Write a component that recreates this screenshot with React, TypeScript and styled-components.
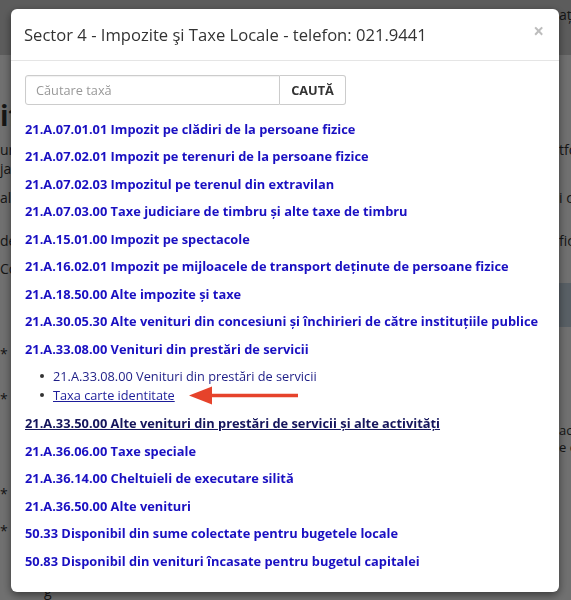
import React from 'react'
import styled, { createGlobalStyle } from 'styled-components'

const GlobalStyle = createGlobalStyle`
  html, body {
    margin: 0;
    padding: 0;
    width: 571px;
    height: 600px;
    overflow: hidden;
    font-family: 'Open Sans', 'Noto Sans', sans-serif;
  }
`

const Page = styled.div`
  width: 571px;
  height: 600px;
  background: #fff;
  color: #333;
  overflow: hidden;
`

const NavBar = styled.div`
  height: 55px;
  background: #d2d2d2;
  display: flex;
  justify-content: flex-end;
  align-items: flex-start;
  padding-top: 5px;
  box-sizing: border-box;
  font-size: 14px;
  line-height: 20px;
`

const NavText = styled.span`
  width: 12px;
  white-space: nowrap;
`

const PageBody = styled.div`
  display: flex;
  flex-direction: column;
`

const PageRow = styled.div<{ $h: number; $size?: number; $bold?: boolean; $tint?: string }>`
  height: ${(p) => p.$h}px;
  display: flex;
  justify-content: space-between;
  align-items: center;
  font-size: ${(p) => p.$size ?? 14}px;
  font-weight: ${(p) => (p.$bold ? 700 : 400)};
  background: ${(p) => p.$tint ?? 'transparent'};
  white-space: nowrap;
`

const Frag = styled.span<{ $indent?: number }>`
  width: 12px;
  padding-left: ${(p) => p.$indent ?? 0}px;
`

const Backdrop = styled.div`
  position: fixed;
  inset: 0;
  background: rgba(0, 0, 0, 0.56);
  padding: 9px 0 0 11px;
`

const Modal = styled.div`
  width: 548px;
  background: #fff;
  border-radius: 6px;
  box-shadow: 0 3px 9px rgba(0, 0, 0, 0.5);
`

const Header = styled.div`
  display: flex;
  justify-content: space-between;
  align-items: center;
  padding: 14px 15px 14px 13px;
  border-bottom: 1px solid #e5e5e5;
`

const Title = styled.h4`
  margin: 0;
  font-size: 16.6px;
  font-weight: 400;
  line-height: 23px;
  color: #333;
`

const Close = styled.button`
  border: 0;
  background: none;
  padding: 0;
  font-family: 'Open Sans', sans-serif;
  font-size: 19px;
  font-weight: 700;
  line-height: 1;
  color: #bdbdbd;
  margin-top: -6px;
`

const Body = styled.div`
  padding: 14px 13px 13px 14px;
`

const SearchGroup = styled.div`
  display: flex;
  height: 30px;
  margin-bottom: 15px;
`

const SearchInput = styled.input`
  width: 255px;
  box-sizing: border-box;
  border: 1px solid #ccc;
  border-radius: 3px 0 0 3px;
  padding: 0 10px;
  font-family: 'Open Sans', sans-serif;
  font-size: 12.75px;
  color: #555;
  box-shadow: inset 0 1px 1px rgba(0, 0, 0, 0.06);
  &::placeholder {
    color: #999;
  }
`

const SearchButton = styled.button`
  width: 66px;
  border: 1px solid #ccc;
  border-left: 0;
  border-radius: 0 3px 3px 0;
  background: #fff;
  font-family: 'Open Sans', sans-serif;
  font-size: 12.75px;
  font-weight: 700;
  color: #333;
  padding: 0;
`

const TaxList = styled.div`
  display: flex;
  flex-direction: column;
`

const TaxLink = styled.a<{ $visited?: boolean }>`
  display: block;
  font-size: 12.85px;
  font-weight: 700;
  line-height: 18px;
  margin-bottom: 9.45px;
  color: ${(p) => (p.$visited ? '#16165c' : '#1a10c2')};
  text-decoration: ${(p) => (p.$visited ? 'underline' : 'none')};
  white-space: nowrap;
`

const SubList = styled.ul`
  margin: 0 0 9.45px;
  padding: 0 0 0 28px;
  list-style: none;
`

const SubItem = styled.li`
  display: flex;
  align-items: center;
  font-size: 12.75px;
  line-height: 18px;
  color: #1d1d86;
  &::before {
    content: '';
    width: 4px;
    height: 4px;
    border-radius: 50%;
    background: #333;
    margin: 0 9px 0 -13px;
  }
`

const SubLink = styled.a`
  color: #1d1d9a;
  text-decoration: underline;
`

const Arrow = styled.svg`
  margin-left: 14px;
  flex: none;
`

const taxes = [
  '21.A.07.01.01 Impozit pe clădiri de la persoane fizice',
  '21.A.07.02.01 Impozit pe terenuri de la persoane fizice',
  '21.A.07.02.03 Impozitul pe terenul din extravilan',
  '21.A.07.03.00 Taxe judiciare de timbru și alte taxe de timbru',
  '21.A.15.01.00 Impozit pe spectacole',
  '21.A.16.02.01 Impozit pe mijloacele de transport deținute de persoane fizice',
  '21.A.18.50.00 Alte impozite și taxe',
  '21.A.30.05.30 Alte venituri din concesiuni și închirieri de către instituțiile publice',
  '21.A.33.08.00 Venituri din prestări de servicii',
]

const moreTaxes = [
  '21.A.36.06.00 Taxe speciale',
  '21.A.36.14.00 Cheltuieli de executare silită',
  '21.A.36.50.00 Alte venituri',
  '50.33 Disponibil din sume colectate pentru bugetele locale',
  '50.83 Disponibil din venituri încasate pentru bugetul capitalei',
]

// the page behind the backdrop: only its edges show
type Row = { h: number; left?: string; right?: string; size?: number; bold?: boolean; tint?: string; indent?: number }

const rows: Row[] = [
  { h: 42 },
  { h: 36, left: 'if', size: 28, bold: true },
  { h: 7 },
  { h: 19, left: 'ur', right: 'tfo' },
  { h: 18, left: 'ja' },
  { h: 11 },
  { h: 18, left: 'ală', right: 'i c' },
  { h: 25 },
  { h: 18, left: 'de', right: 'fic' },
  { h: 10 },
  { h: 18, left: 'Co' },
  { h: 6 },
  { h: 44, tint: 'linear-gradient(90deg, #fff 97%, #c9d9e6 97%)' },
  { h: 17 },
  { h: 18, left: '*' },
  { h: 27 },
  { h: 18, left: '*' },
  { h: 14 },
  { h: 18, right: 'ac', size: 13 },
  { h: 16, right: 'e c', size: 13 },
  { h: 29 },
  { h: 18, left: '*' },
  { h: 19 },
  { h: 18, left: '*' },
  { h: 42 },
  { h: 18, left: 'g', indent: 44 },
]

export default function App() {
  return (
    <>
      <GlobalStyle />
      <Page>
        <NavBar>
          <NavText>ații</NavText>
        </NavBar>
        <PageBody>
          {rows.map((r, i) => (
            <PageRow key={i} $h={r.h} $size={r.size} $bold={r.bold} $tint={r.tint}>
              <Frag $indent={r.indent}>{r.left}</Frag>
              <Frag>{r.right}</Frag>
            </PageRow>
          ))}
        </PageBody>
      </Page>

      <Backdrop>
        <Modal>
          <Header>
            <Title>Sector 4 - Impozite şi Taxe Locale - telefon: 021.9441</Title>
            <Close aria-label="Închide">×</Close>
          </Header>
          <Body>
            <SearchGroup>
              <SearchInput placeholder="Căutare taxă" />
              <SearchButton>CAUTĂ</SearchButton>
            </SearchGroup>
            <TaxList>
              {taxes.map((t) => (
                <TaxLink key={t} href="#">
                  {t}
                </TaxLink>
              ))}
              <SubList>
                <SubItem>21.A.33.08.00 Venituri din prestări de servicii</SubItem>
                <SubItem>
                  <SubLink href="#">Taxa carte identitate</SubLink>
                  <Arrow width="110" height="20" viewBox="0 0 110 20">
                    <path d="M109 10.5 H20" stroke="#e6432b" strokeWidth="3.5" />
                    <path d="M0 10.5 L23 1.5 L23 19.5 Z" fill="#e6432b" />
                  </Arrow>
                </SubItem>
              </SubList>
              <TaxLink href="#" $visited>
                21.A.33.50.00 Alte venituri din prestări de servicii și alte activități
              </TaxLink>
              {moreTaxes.map((t) => (
                <TaxLink key={t} href="#">
                  {t}
                </TaxLink>
              ))}
            </TaxList>
          </Body>
        </Modal>
      </Backdrop>
    </>
  )
}
